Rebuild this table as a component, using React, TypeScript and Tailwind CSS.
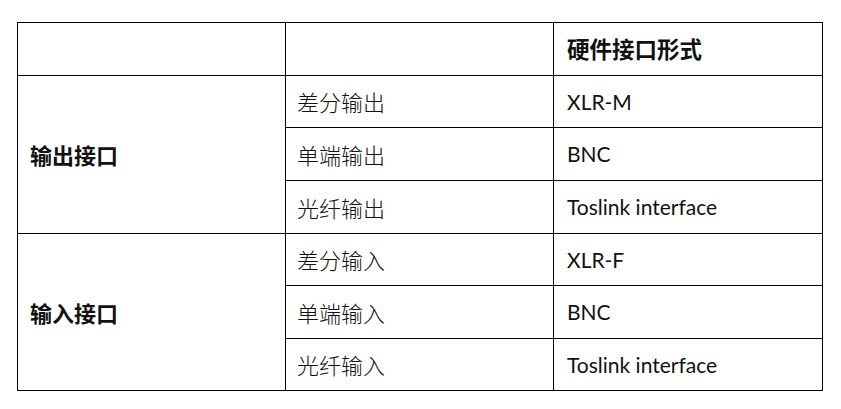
import React from "react";

const cjk = { fontFamily: '"Noto Sans CJK SC", sans-serif' };
const lat = { fontFamily: 'Lato, "Noto Sans CJK SC", sans-serif' };

function Cell({ children, className = "", latin = false, bold = false }: { children?: React.ReactNode; className?: string; latin?: boolean; bold?: boolean }) {
  return (
    <div
      className={`bg-white flex items-center text-[#111] ${bold ? "font-bold" : latin ? "font-normal" : "font-light"} ${className}`}
      style={latin ? lat : cjk}
    >
      {children}
    </div>
  );
}

export default function App() {
  return (
    <div className="w-[841px] h-[409px] bg-white pt-[22px] pl-[17px]">
      <div className="grid w-[806px] grid-cols-[267px_267px_268px] grid-rows-[52px_51px_52px_52px_51px_52px_51px] gap-px bg-black p-px">
        <Cell />
        <Cell />
        <Cell bold className="pl-[13px] text-[22.5px]">硬件接口形式</Cell>

        <Cell bold className="row-span-3 pl-[12px] text-[22px]">输出接口</Cell>
        <Cell className="pl-[11px] text-[22px]">差分输出</Cell>
        <Cell latin className="pl-[13px] text-[21px]">XLR-M</Cell>
        <Cell className="pl-[11px] text-[22px]">单端输出</Cell>
        <Cell latin className="pl-[13px] text-[21px]">BNC</Cell>
        <Cell className="pl-[11px] text-[22px]">光纤输出</Cell>
        <Cell latin className="pl-[13px] text-[21px]">Toslink interface</Cell>

        <Cell bold className="row-span-3 pl-[12px] text-[22px]">输入接口</Cell>
        <Cell className="pl-[11px] text-[22px]">差分输入</Cell>
        <Cell latin className="pl-[13px] text-[21px]">XLR-F</Cell>
        <Cell className="pl-[11px] text-[22px]">单端输入</Cell>
        <Cell latin className="pl-[13px] text-[21px]">BNC</Cell>
        <Cell className="pl-[11px] text-[22px]">光纤输入</Cell>
        <Cell latin className="pl-[13px] text-[21px]">Toslink interface</Cell>
      </div>
    </div>
  );
}
